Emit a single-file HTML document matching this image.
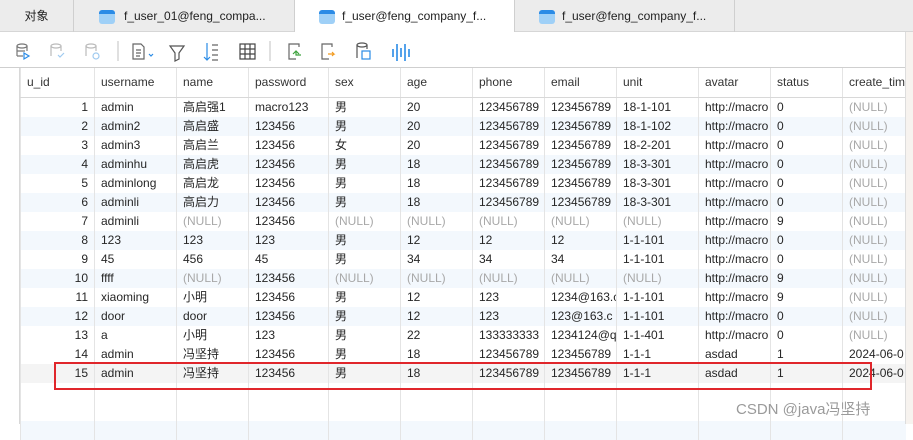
<!DOCTYPE html>
<html><head><meta charset="utf-8"><style>
*{margin:0;padding:0;box-sizing:border-box}
body{width:913px;height:424px;overflow:hidden;background:#fff;font-family:"Liberation Sans","Noto Sans CJK SC",sans-serif;font-size:12px;color:#262626;position:relative}
.tabs{position:absolute;left:0;top:0;width:913px;height:32px;background:#ececec;border-bottom:1px solid #d6d6d6}
.tab{position:absolute;top:0;height:32px;border-right:1px solid #cfcfcf;font-size:12px;line-height:33px;color:#222}
.tab.active{background:#fff;height:33px}
.ic{position:absolute;top:10px;width:16px;height:14px;border-radius:3px;background:linear-gradient(#2a8be6 0 4px,#9fd0f7 4px)}
.tool{position:absolute;top:32px;left:0;width:905px;height:36px;background:#fff;border-bottom:1px solid #cfcfcf}
.right{position:absolute;left:905px;top:32px;width:8px;height:392px;background:#f7f3ef;border-left:1px solid #ddd}
table{position:absolute;left:20px;top:68px;border-collapse:collapse;table-layout:fixed;width:885px}
td{height:19px;padding:0 6px;white-space:nowrap;overflow:hidden;border-left:1px solid #e4e4e4;line-height:19px}
tr.h td{height:29px;color:#333;border-bottom:1px solid #d8d8d8}
td.n{text-align:right}
tr.e td{background:#f3f8fd}
tr.s td{background:#f4f4f4}
.nl{color:#a8a8a8}
.gut{position:absolute;left:0;top:68px;width:20px;height:356px;border-right:1px solid #d8d8d8}
</style></head><body>
<div class="tabs">
<div class="tab" style="left:0;width:74px;text-align:center">对象</div>
<div class="tab" style="left:74px;width:221px"><span class="ic" style="left:25px"></span><span style="position:absolute;left:50px">f_user_01@feng_compa...</span></div>
<div class="tab active" style="left:295px;width:220px"><span class="ic" style="left:24px"></span><span style="position:absolute;left:47px">f_user@feng_company_f...</span></div>
<div class="tab" style="left:515px;width:220px"><span class="ic" style="left:24px"></span><span style="position:absolute;left:47px">f_user@feng_company_f...</span></div>
</div>
<div class="tool">
<svg width="420" height="36" style="position:absolute;left:0;top:0" fill="none" stroke-width="1.2">
<g stroke="#777"><ellipse cx="22" cy="14" rx="5" ry="2"/><path d="M17 14v10M27 14v5M17 19h8M17 24h6"/><path d="M24 21l5 3-5 3z" stroke="#2a8be6"/></g>
<g stroke="#bbb"><ellipse cx="56" cy="14" rx="5" ry="2"/><path d="M51 14v10M61 14v5"/><path d="M58 23l2 2 4-4" stroke="#9fcaf0"/></g>
<g stroke="#bbb"><ellipse cx="91" cy="14" rx="5" ry="2"/><path d="M86 14v10M96 14v5"/><circle cx="96" cy="24" r="3" stroke="#9fcaf0"/></g>
<path d="M118 9v20" stroke="#ccc"/>
<g stroke="#666"><path d="M133 12h8l3 3v12h-11z"/><path d="M136 18h5M136 21h5M136 24h4"/><path d="M149 22l2 2 2-2" stroke="#2a8be6"/></g>
<path d="M170 14h14l-5 7v6l-4 2v-8z" stroke="#555"/>
<g stroke="#2a8be6"><path d="M207 11v17M204 25l3 3 3-3"/><path d="M212 13h6M212 18h6M212 23h6M212 28h6" stroke="#666"/></g>
<g stroke="#444"><rect x="240" y="12" width="15" height="15"/><path d="M245 12v15M250 12v15M240 17h15M240 22h15"/></g>
<path d="M270 9v20" stroke="#ccc"/>
<g stroke="#666"><path d="M296 27h-7v-15h10v3"/><path d="M293 22l3-3 3 3M296 19v4h5" stroke="#3da23d"/></g>
<g stroke="#666"><path d="M329 27h-7v-15h10v3"/><path d="M328 22h6l-2-2M334 22l-2 2" stroke="#f29a1e"/></g>
<g stroke="#555"><ellipse cx="362" cy="13" rx="5" ry="2"/><path d="M357 13v13M367 13v4"/><rect x="362" y="19" width="8" height="8" stroke="#2a8be6"/></g>
<g stroke="#2a8be6" stroke-width="1.6"><path d="M393 17v8M397 12v17M401 16v9M405 12v17M409 17v8"/></g>
</svg>
</div>
<div class="gut"></div>
<table>
<colgroup><col style="width:74px"><col style="width:82px"><col style="width:72px"><col style="width:80px"><col style="width:72px"><col style="width:72px"><col style="width:72px"><col style="width:72px"><col style="width:82px"><col style="width:72px"><col style="width:72px"><col style="width:63px"></colgroup>
<tr class="h"><td>u_id</td><td>username</td><td>name</td><td>password</td><td>sex</td><td>age</td><td>phone</td><td>email</td><td>unit</td><td>avatar</td><td>status</td><td>create_time</td></tr>
<tr><td class="n">1</td><td>admin</td><td>高启强1</td><td>macro123</td><td>男</td><td>20</td><td>123456789</td><td>123456789</td><td>18-1-101</td><td>http://macro</td><td>0</td><td class="nl">(NULL)</td></tr>
<tr class="e"><td class="n">2</td><td>admin2</td><td>高启盛</td><td>123456</td><td>男</td><td>20</td><td>123456789</td><td>123456789</td><td>18-1-102</td><td>http://macro</td><td>0</td><td class="nl">(NULL)</td></tr>
<tr><td class="n">3</td><td>admin3</td><td>高启兰</td><td>123456</td><td>女</td><td>20</td><td>123456789</td><td>123456789</td><td>18-2-201</td><td>http://macro</td><td>0</td><td class="nl">(NULL)</td></tr>
<tr class="e"><td class="n">4</td><td>adminhu</td><td>高启虎</td><td>123456</td><td>男</td><td>18</td><td>123456789</td><td>123456789</td><td>18-3-301</td><td>http://macro</td><td>0</td><td class="nl">(NULL)</td></tr>
<tr><td class="n">5</td><td>adminlong</td><td>高启龙</td><td>123456</td><td>男</td><td>18</td><td>123456789</td><td>123456789</td><td>18-3-301</td><td>http://macro</td><td>0</td><td class="nl">(NULL)</td></tr>
<tr class="e"><td class="n">6</td><td>adminli</td><td>高启力</td><td>123456</td><td>男</td><td>18</td><td>123456789</td><td>123456789</td><td>18-3-301</td><td>http://macro</td><td>0</td><td class="nl">(NULL)</td></tr>
<tr><td class="n">7</td><td>adminli</td><td class="nl">(NULL)</td><td>123456</td><td class="nl">(NULL)</td><td class="nl">(NULL)</td><td class="nl">(NULL)</td><td class="nl">(NULL)</td><td class="nl">(NULL)</td><td>http://macro</td><td>9</td><td class="nl">(NULL)</td></tr>
<tr class="e"><td class="n">8</td><td>123</td><td>123</td><td>123</td><td>男</td><td>12</td><td>12</td><td>12</td><td>1-1-101</td><td>http://macro</td><td>0</td><td class="nl">(NULL)</td></tr>
<tr><td class="n">9</td><td>45</td><td>456</td><td>45</td><td>男</td><td>34</td><td>34</td><td>34</td><td>1-1-101</td><td>http://macro</td><td>0</td><td class="nl">(NULL)</td></tr>
<tr class="e"><td class="n">10</td><td>ffff</td><td class="nl">(NULL)</td><td>123456</td><td class="nl">(NULL)</td><td class="nl">(NULL)</td><td class="nl">(NULL)</td><td class="nl">(NULL)</td><td class="nl">(NULL)</td><td>http://macro</td><td>9</td><td class="nl">(NULL)</td></tr>
<tr><td class="n">11</td><td>xiaoming</td><td>小明</td><td>123456</td><td>男</td><td>12</td><td>123</td><td>1234@163.c</td><td>1-1-101</td><td>http://macro</td><td>9</td><td class="nl">(NULL)</td></tr>
<tr class="e"><td class="n">12</td><td>door</td><td>door</td><td>123456</td><td>男</td><td>12</td><td>123</td><td>123@163.c</td><td>1-1-101</td><td>http://macro</td><td>0</td><td class="nl">(NULL)</td></tr>
<tr><td class="n">13</td><td>a</td><td>小明</td><td>123</td><td>男</td><td>22</td><td>133333333</td><td>1234124@q</td><td>1-1-401</td><td>http://macro</td><td>0</td><td class="nl">(NULL)</td></tr>
<tr><td class="n">14</td><td>admin</td><td>冯坚持</td><td>123456</td><td>男</td><td>18</td><td>123456789</td><td>123456789</td><td>1-1-1</td><td>asdad</td><td>1</td><td>2024-06-0</td></tr>
<tr class="s"><td class="n">15</td><td>admin</td><td>冯坚持</td><td>123456</td><td>男</td><td>18</td><td>123456789</td><td>123456789</td><td>1-1-1</td><td>asdad</td><td>1</td><td>2024-06-0</td></tr>
<tr><td></td><td></td><td></td><td></td><td></td><td></td><td></td><td></td><td></td><td></td><td></td><td></td></tr>
<tr><td></td><td></td><td></td><td></td><td></td><td></td><td></td><td></td><td></td><td></td><td></td><td></td></tr>
<tr class="e"><td></td><td></td><td></td><td></td><td></td><td></td><td></td><td></td><td></td><td></td><td></td><td></td></tr>
</table>
<div class="right"></div>
<div style="position:absolute;left:54px;top:362px;width:818px;height:28px;border:2px solid #e0262b"></div>
<div style="position:absolute;left:736px;top:398px;font-size:15px;color:#9a9a9a">CSDN @java冯坚持</div>
</body></html>
